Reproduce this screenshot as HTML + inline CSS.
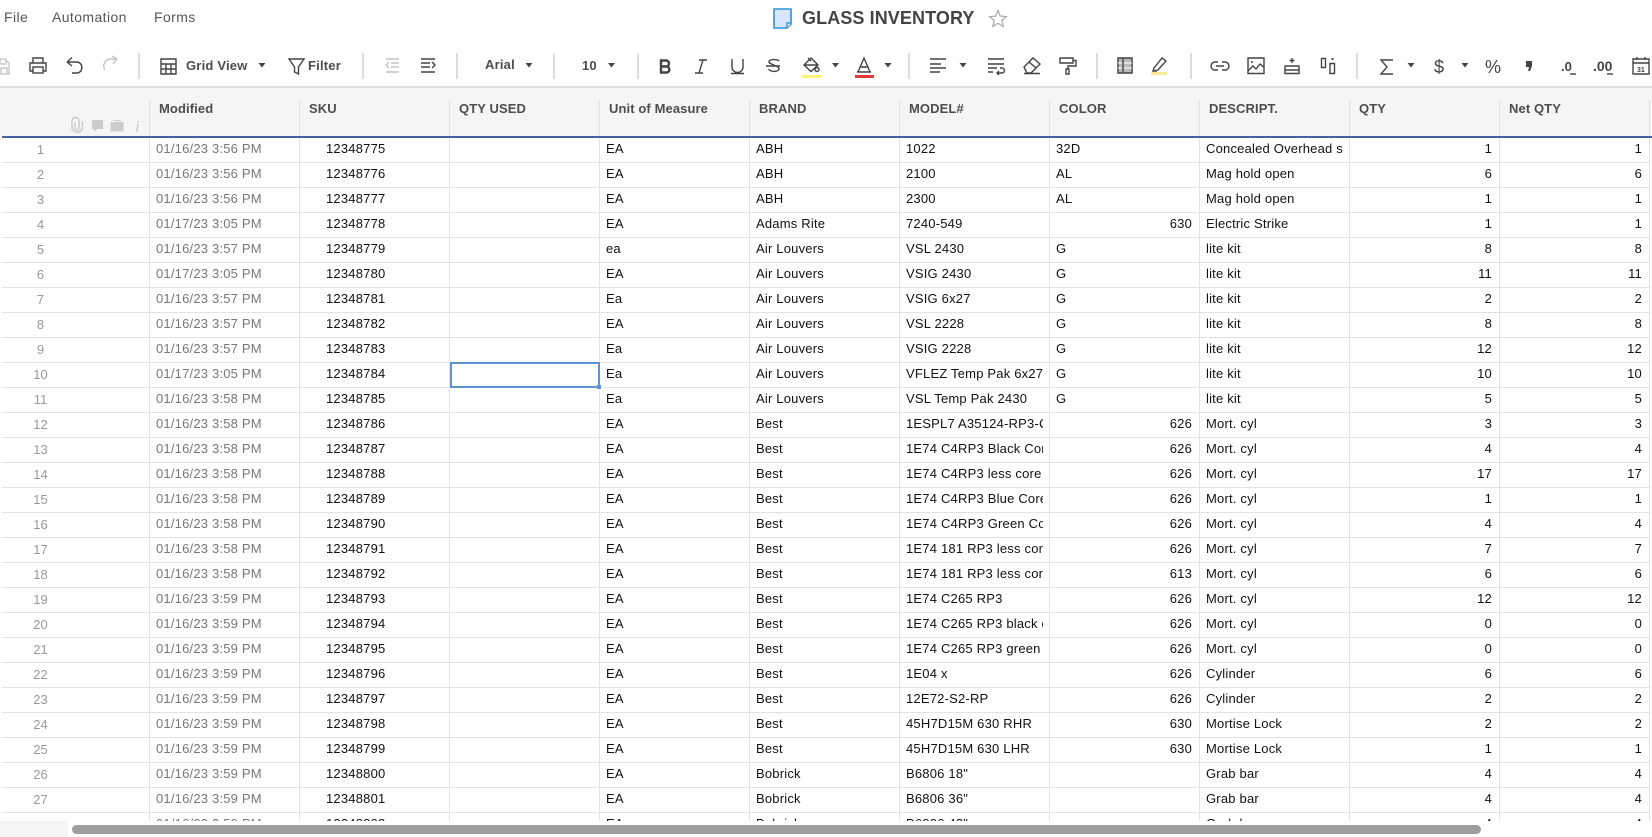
<!DOCTYPE html>
<html><head><meta charset="utf-8"><title>GLASS INVENTORY</title>
<style>
html,body{margin:0;padding:0;background:#fff;width:1652px;height:837px;overflow:hidden;font-family:"Liberation Sans",Arial,sans-serif}
.a{position:absolute;white-space:nowrap}
.m{top:9px;font-size:14px;color:#555;letter-spacing:.4px}
.t{font-size:13px;font-weight:bold;color:#4d4d4d;letter-spacing:.2px}
#hdr{position:absolute;left:0;top:86px;width:1652px;height:50px;background:#f6f5f3;border-top:2px solid #dedcd9;box-sizing:border-box}
.h{position:absolute;top:12px;height:38px;width:150px;border-left:1px solid #e2e2e2;box-sizing:border-box;padding:0 0 0 9px;font-size:13px;font-weight:bold;color:#4d4d4d;line-height:17px;letter-spacing:.1px}
#line{position:absolute;left:2px;top:136px;width:1650px;height:2px;background:#47609f}
#g{position:absolute;left:2px;top:138px;width:1650px;height:683px;overflow:hidden}
table{border-collapse:separate;border-spacing:0;table-layout:fixed;width:1648px;font-size:13px;color:#111;letter-spacing:.2px}
col{width:150px}col.f{width:148px}
td{height:24px;padding:0;border-right:1px solid #e3e3e3;border-bottom:1px solid #e3e3e3;box-sizing:content-box;line-height:22px;vertical-align:top}
td>b{display:block;font-weight:normal;margin:0 6px 0 6px;overflow:hidden;white-space:nowrap;height:22px}
td.n{text-align:center;color:#999;padding-right:70px;box-sizing:border-box;line-height:24px;letter-spacing:0}
td.d{color:#777}
td.s>b{margin-left:26px}
td.r{text-align:right}td.r>b{margin-right:7px}
#sel{position:absolute;left:450px;top:362px;width:150px;height:26px;box-sizing:border-box;border:2px solid #5b94d0}
#selh{position:absolute;left:597px;top:385px;width:4px;height:4px;background:#5b94d0}
#foot{position:absolute;left:0;top:821px;width:68px;height:16px;background:#f6f5f3}
#bar{position:absolute;left:72px;top:825px;width:1409px;height:9px;background:#9e9e9e;border-radius:5px}
svg{position:absolute;left:0;top:0}
.i{fill:none;stroke:#444;stroke-width:1.4}
.l{fill:none;stroke:#c4c4c4;stroke-width:1.4}
.c{fill:#444}
</style></head><body>
<div class="a m" style="left:4px">File</div>
<div class="a m" style="left:52px">Automation</div>
<div class="a m" style="left:154px">Forms</div>
<div class="a" style="left:802px;top:8px;font-size:18px;font-weight:bold;color:#444;letter-spacing:.1px">GLASS INVENTORY</div>
<div class="a t" style="left:186px;top:58px">Grid View</div>
<div class="a t" style="left:308px;top:58px">Filter</div>
<div class="a t" style="left:485px;top:57px">Arial</div>
<div class="a t" style="left:582px;top:58px">10</div>
<div id="hdr">
<div class="h" style="left:149px">Modified</div><div class="h" style="left:299px">SKU</div><div class="h" style="left:449px">QTY USED</div><div class="h" style="left:599px">Unit of Measure</div><div class="h" style="left:749px">BRAND</div><div class="h" style="left:899px">MODEL#</div><div class="h" style="left:1049px">COLOR</div><div class="h" style="left:1199px">DESCRIPT.</div><div class="h" style="left:1349px">QTY</div><div class="h" style="left:1499px">Net QTY</div><div class="h" style="left:1649px"></div>
</div>
<div id="line"></div>
<div id="g"><table><colgroup><col class="f"><col><col><col><col><col><col><col><col><col><col></colgroup>
<tr><td class="n">1</td><td class="d"><b>01/16/23 3:56 PM</b></td><td class="s"><b>12348775</b></td><td></td><td><b>EA</b></td><td><b>ABH</b></td><td><b>1022</b></td><td><b>32D</b></td><td><b>Concealed Overhead stop</b></td><td class="r"><b>1</b></td><td class="r"><b>1</b></td></tr>
<tr><td class="n">2</td><td class="d"><b>01/16/23 3:56 PM</b></td><td class="s"><b>12348776</b></td><td></td><td><b>EA</b></td><td><b>ABH</b></td><td><b>2100</b></td><td><b>AL</b></td><td><b>Mag hold open</b></td><td class="r"><b>6</b></td><td class="r"><b>6</b></td></tr>
<tr><td class="n">3</td><td class="d"><b>01/16/23 3:56 PM</b></td><td class="s"><b>12348777</b></td><td></td><td><b>EA</b></td><td><b>ABH</b></td><td><b>2300</b></td><td><b>AL</b></td><td><b>Mag hold open</b></td><td class="r"><b>1</b></td><td class="r"><b>1</b></td></tr>
<tr><td class="n">4</td><td class="d"><b>01/17/23 3:05 PM</b></td><td class="s"><b>12348778</b></td><td></td><td><b>EA</b></td><td><b>Adams Rite</b></td><td><b>7240-549</b></td><td class="r"><b>630</b></td><td><b>Electric Strike</b></td><td class="r"><b>1</b></td><td class="r"><b>1</b></td></tr>
<tr><td class="n">5</td><td class="d"><b>01/16/23 3:57 PM</b></td><td class="s"><b>12348779</b></td><td></td><td><b>ea</b></td><td><b>Air Louvers</b></td><td><b>VSL 2430</b></td><td><b>G</b></td><td><b>lite kit</b></td><td class="r"><b>8</b></td><td class="r"><b>8</b></td></tr>
<tr><td class="n">6</td><td class="d"><b>01/17/23 3:05 PM</b></td><td class="s"><b>12348780</b></td><td></td><td><b>EA</b></td><td><b>Air Louvers</b></td><td><b>VSIG 2430</b></td><td><b>G</b></td><td><b>lite kit</b></td><td class="r"><b>11</b></td><td class="r"><b>11</b></td></tr>
<tr><td class="n">7</td><td class="d"><b>01/16/23 3:57 PM</b></td><td class="s"><b>12348781</b></td><td></td><td><b>Ea</b></td><td><b>Air Louvers</b></td><td><b>VSIG 6x27</b></td><td><b>G</b></td><td><b>lite kit</b></td><td class="r"><b>2</b></td><td class="r"><b>2</b></td></tr>
<tr><td class="n">8</td><td class="d"><b>01/16/23 3:57 PM</b></td><td class="s"><b>12348782</b></td><td></td><td><b>EA</b></td><td><b>Air Louvers</b></td><td><b>VSL 2228</b></td><td><b>G</b></td><td><b>lite kit</b></td><td class="r"><b>8</b></td><td class="r"><b>8</b></td></tr>
<tr><td class="n">9</td><td class="d"><b>01/16/23 3:57 PM</b></td><td class="s"><b>12348783</b></td><td></td><td><b>Ea</b></td><td><b>Air Louvers</b></td><td><b>VSIG 2228</b></td><td><b>G</b></td><td><b>lite kit</b></td><td class="r"><b>12</b></td><td class="r"><b>12</b></td></tr>
<tr><td class="n">10</td><td class="d"><b>01/17/23 3:05 PM</b></td><td class="s"><b>12348784</b></td><td></td><td><b>Ea</b></td><td><b>Air Louvers</b></td><td><b>VFLEZ Temp Pak 6x27</b></td><td><b>G</b></td><td><b>lite kit</b></td><td class="r"><b>10</b></td><td class="r"><b>10</b></td></tr>
<tr><td class="n">11</td><td class="d"><b>01/16/23 3:58 PM</b></td><td class="s"><b>12348785</b></td><td></td><td><b>Ea</b></td><td><b>Air Louvers</b></td><td><b>VSL Temp Pak 2430</b></td><td><b>G</b></td><td><b>lite kit</b></td><td class="r"><b>5</b></td><td class="r"><b>5</b></td></tr>
<tr><td class="n">12</td><td class="d"><b>01/16/23 3:58 PM</b></td><td class="s"><b>12348786</b></td><td></td><td><b>EA</b></td><td><b>Best</b></td><td><b>1ESPL7 A35124-RP3-CORE</b></td><td class="r"><b>626</b></td><td><b>Mort. cyl</b></td><td class="r"><b>3</b></td><td class="r"><b>3</b></td></tr>
<tr><td class="n">13</td><td class="d"><b>01/16/23 3:58 PM</b></td><td class="s"><b>12348787</b></td><td></td><td><b>EA</b></td><td><b>Best</b></td><td><b>1E74 C4RP3 Black Core</b></td><td class="r"><b>626</b></td><td><b>Mort. cyl</b></td><td class="r"><b>4</b></td><td class="r"><b>4</b></td></tr>
<tr><td class="n">14</td><td class="d"><b>01/16/23 3:58 PM</b></td><td class="s"><b>12348788</b></td><td></td><td><b>EA</b></td><td><b>Best</b></td><td><b>1E74 C4RP3 less core</b></td><td class="r"><b>626</b></td><td><b>Mort. cyl</b></td><td class="r"><b>17</b></td><td class="r"><b>17</b></td></tr>
<tr><td class="n">15</td><td class="d"><b>01/16/23 3:58 PM</b></td><td class="s"><b>12348789</b></td><td></td><td><b>EA</b></td><td><b>Best</b></td><td><b>1E74 C4RP3 Blue Core</b></td><td class="r"><b>626</b></td><td><b>Mort. cyl</b></td><td class="r"><b>1</b></td><td class="r"><b>1</b></td></tr>
<tr><td class="n">16</td><td class="d"><b>01/16/23 3:58 PM</b></td><td class="s"><b>12348790</b></td><td></td><td><b>EA</b></td><td><b>Best</b></td><td><b>1E74 C4RP3 Green Core</b></td><td class="r"><b>626</b></td><td><b>Mort. cyl</b></td><td class="r"><b>4</b></td><td class="r"><b>4</b></td></tr>
<tr><td class="n">17</td><td class="d"><b>01/16/23 3:58 PM</b></td><td class="s"><b>12348791</b></td><td></td><td><b>EA</b></td><td><b>Best</b></td><td><b>1E74 181 RP3 less core</b></td><td class="r"><b>626</b></td><td><b>Mort. cyl</b></td><td class="r"><b>7</b></td><td class="r"><b>7</b></td></tr>
<tr><td class="n">18</td><td class="d"><b>01/16/23 3:58 PM</b></td><td class="s"><b>12348792</b></td><td></td><td><b>EA</b></td><td><b>Best</b></td><td><b>1E74 181 RP3 less core</b></td><td class="r"><b>613</b></td><td><b>Mort. cyl</b></td><td class="r"><b>6</b></td><td class="r"><b>6</b></td></tr>
<tr><td class="n">19</td><td class="d"><b>01/16/23 3:59 PM</b></td><td class="s"><b>12348793</b></td><td></td><td><b>EA</b></td><td><b>Best</b></td><td><b>1E74 C265 RP3</b></td><td class="r"><b>626</b></td><td><b>Mort. cyl</b></td><td class="r"><b>12</b></td><td class="r"><b>12</b></td></tr>
<tr><td class="n">20</td><td class="d"><b>01/16/23 3:59 PM</b></td><td class="s"><b>12348794</b></td><td></td><td><b>EA</b></td><td><b>Best</b></td><td><b>1E74 C265 RP3 black core</b></td><td class="r"><b>626</b></td><td><b>Mort. cyl</b></td><td class="r"><b>0</b></td><td class="r"><b>0</b></td></tr>
<tr><td class="n">21</td><td class="d"><b>01/16/23 3:59 PM</b></td><td class="s"><b>12348795</b></td><td></td><td><b>EA</b></td><td><b>Best</b></td><td><b>1E74 C265 RP3 green core</b></td><td class="r"><b>626</b></td><td><b>Mort. cyl</b></td><td class="r"><b>0</b></td><td class="r"><b>0</b></td></tr>
<tr><td class="n">22</td><td class="d"><b>01/16/23 3:59 PM</b></td><td class="s"><b>12348796</b></td><td></td><td><b>EA</b></td><td><b>Best</b></td><td><b>1E04 x</b></td><td class="r"><b>626</b></td><td><b>Cylinder</b></td><td class="r"><b>6</b></td><td class="r"><b>6</b></td></tr>
<tr><td class="n">23</td><td class="d"><b>01/16/23 3:59 PM</b></td><td class="s"><b>12348797</b></td><td></td><td><b>EA</b></td><td><b>Best</b></td><td><b>12E72-S2-RP</b></td><td class="r"><b>626</b></td><td><b>Cylinder</b></td><td class="r"><b>2</b></td><td class="r"><b>2</b></td></tr>
<tr><td class="n">24</td><td class="d"><b>01/16/23 3:59 PM</b></td><td class="s"><b>12348798</b></td><td></td><td><b>EA</b></td><td><b>Best</b></td><td><b>45H7D15M 630 RHR</b></td><td class="r"><b>630</b></td><td><b>Mortise Lock</b></td><td class="r"><b>2</b></td><td class="r"><b>2</b></td></tr>
<tr><td class="n">25</td><td class="d"><b>01/16/23 3:59 PM</b></td><td class="s"><b>12348799</b></td><td></td><td><b>EA</b></td><td><b>Best</b></td><td><b>45H7D15M 630 LHR</b></td><td class="r"><b>630</b></td><td><b>Mortise Lock</b></td><td class="r"><b>1</b></td><td class="r"><b>1</b></td></tr>
<tr><td class="n">26</td><td class="d"><b>01/16/23 3:59 PM</b></td><td class="s"><b>12348800</b></td><td></td><td><b>EA</b></td><td><b>Bobrick</b></td><td><b>B6806 18"</b></td><td></td><td><b>Grab bar</b></td><td class="r"><b>4</b></td><td class="r"><b>4</b></td></tr>
<tr><td class="n">27</td><td class="d"><b>01/16/23 3:59 PM</b></td><td class="s"><b>12348801</b></td><td></td><td><b>EA</b></td><td><b>Bobrick</b></td><td><b>B6806 36"</b></td><td></td><td><b>Grab bar</b></td><td class="r"><b>4</b></td><td class="r"><b>4</b></td></tr>
<tr><td class="n"></td><td class="d"><b>01/16/23 3:59 PM</b></td><td class="s"><b>12348802</b></td><td></td><td><b>EA</b></td><td><b>Bobrick</b></td><td><b>B6806 42"</b></td><td></td><td><b>Grab bar</b></td><td class="r"><b>4</b></td><td class="r"><b>4</b></td></tr>
</table></div>
<div id="sel"></div><div id="selh"></div>
<div id="foot"></div><div id="bar"></div>
<svg width="1652" height="837" viewBox="0 0 1652 837">
<!-- separators -->
<g fill="#dcdcdc"><rect x="138" y="53" width="2" height="26"/><rect x="362" y="53" width="2" height="26"/><rect x="456" y="53" width="2" height="26"/><rect x="553" y="53" width="2" height="26"/><rect x="637" y="53" width="2" height="26"/><rect x="908" y="53" width="2" height="26"/><rect x="1096" y="53" width="2" height="26"/><rect x="1190" y="53" width="2" height="26"/><rect x="1356" y="53" width="2" height="26"/></g>
<!-- carets -->
<g class="c"><path d="M258.500 63h7l-3.500 4.500z"/><path d="M525.500 63h7l-3.500 4.500z"/><path d="M608 63h7l-3.500 4.500z"/><path d="M832 63h7l-3.500 4.500z"/><path d="M884.500 63h7l-3.500 4.500z"/><path d="M959.500 63h7l-3.500 4.500z"/><path d="M1407.500 63h7l-3.500 4.500z"/><path d="M1461.500 63h7l-3.500 4.500z"/></g>
<!-- save -->
<path d="M-5 59h10l4 4v11H-5zM0 59v5h6v-5M1 74v-6h6v6" fill="none" stroke="#c8c8c8" stroke-width="1.4"/>
<!-- print -->
<g class="i"><path d="M33 63v-5h10v5M33 71h-3v-8h16v8h-3"/><rect x="33" y="67" width="10" height="6"/></g>
<!-- undo / redo -->
<path class="i" d="M67 62l5-4.500M67 62l5 4M67 62h10a4.800 5.400 0 0 1 0 11h-5"/>
<path class="l" d="M117 59l-5-3M117 59l-4 5M117 59h-7a6.500 7 0 0 0-5 11"/>
<!-- grid -->
<path class="i" d="M161 59h15v15h-15zM161 64h15M161 69h15M166 64v10M171 64v10"/>
<!-- filter -->
<path class="i" d="M289 59h15l-5.500 8v7l-4-2v-5z"/>
<!-- outdent / indent -->
<path class="l" d="M386 59h13M391 63h8M391 67h8M386 72h13M389 62l-3 3 3 3"/>
<path class="i" d="M421 59h14M421 63h9M421 67h9M421 72h14M432 62l3 3-3 3"/>
<!-- B I U S -->
<path d="M661 60.500h5a3 3 0 0 1 0 6h-5zM661 66.500h6a3.100 3.100 0 0 1 0 6h-6z" fill="none" stroke="#444" stroke-width="2.400"/>
<path class="i" d="M699 60h8M695 73h8M703 60l-4 13"/>
<path class="i" d="M732 59v8a5.500 5.500 0 0 0 11 0v-8M731 73.500h13"/>
<path class="i" d="M766 66h14M779 61c-2-2-9-2-10 .500-.8 3 9 3.500 10 7 .5 3.500-8 4-10.500 .5"/>
<!-- fill -->
<path class="i" d="M804 65l7-7 7 7-7 6.500zM808 58l3 3M804 65h14"/><circle cx="817" cy="69.500" r="2" fill="none" stroke="#444" stroke-width="1.400"/><rect x="802" y="75" width="19" height="3" fill="#fbf47c"/>
<!-- font color -->
<path class="i" d="M858 72l6-14 6 14M860 67h8M857 72h14"/><rect x="855" y="75" width="19" height="3" fill="#e53935"/>
<!-- align -->
<path class="i" d="M930 59h16M930 64h11M930 68h16M930 72h10"/>
<!-- wrap -->
<path class="i" d="M988 59h16M988 64h16M988 68h9M988 72h5M1000 68h2a2 2 0 0 1 0 5h-5M999 71l-2 2 2 2"/>
<!-- eraser -->
<path class="i" d="M1024 67l9-9 7 6-9 9h-4zM1029 62l7 6M1024 73.500h16"/>
<!-- paint -->
<path class="i" d="M1060 58h13v5h-13zM1073 60.500h3v5.500h-8v3M1066 69h3v5h-3z"/>
<!-- table / highlight -->
<path d="M1118 58h14v15h-14z" fill="#bbb" stroke="#444" stroke-width="1.500"/><path d="M1118 63h14M1118 68h14" stroke="#fff" stroke-width="1"/><path d="M1123 58v15" stroke="#444" stroke-width="1.400"/>
<path class="i" d="M1154 68l8-10 4 3-8 9-5 1zM1153 71h4"/><rect x="1151" y="72" width="16" height="3" fill="#fbe99a"/>
<!-- link -->
<path class="i" d="M1218 62h-3a4 4 0 0 0 0 8h3M1222 62h3a4 4 0 0 1 0 8h-3M1216 66h8"/>
<!-- image -->
<path class="i" d="M1248 58h16v15.500h-16zM1248 71l5-5 3 3 4-5 4 3.500"/><circle cx="1252" cy="62" r="1" fill="#444"/>
<!-- insert row -->
<path class="i" d="M1285 66h14v7.500h-14zM1285 70h14M1292 58v5M1289.500 60.500h5"/>
<!-- insert col -->
<path class="i" d="M1321.500 58.500h4v9h-4zM1330 63.500h4.500v10h-4.500z"/><path class="c" d="M1331.500 58h2v2h-2z"/>
<!-- sigma, $ -->
<path class="i" d="M1393 60h-12l6 7-6 7h12"/>
<text x="1434" y="73" font-family="Liberation Sans" font-size="18" fill="#444">$</text>
<text x="1485" y="73" font-family="Liberation Sans" font-size="18" fill="#444">%</text>
<path class="c" d="M1526 61h6v5l-2 5h-2l1-4h-3z"/>
<text x="1561" y="71" font-family="Liberation Sans" font-size="13" font-weight="bold" fill="#444">.0</text>
<path class="i" d="M1570 74h6" stroke-width="1"/>
<text x="1593" y="71" font-family="Liberation Sans" font-size="14" font-weight="bold" fill="#444">.00</text>
<path class="i" d="M1607 74h6" stroke-width="1"/>
<!-- calendar -->
<path class="i" d="M1633 59h16v15h-16zM1633 63h16M1637 57v3M1645 57v3"/>
<text x="1637" y="72" font-family="Liberation Sans" font-size="7" font-weight="bold" fill="#444">31</text>
<!-- doc icon -->
<path d="M774 9h17v15l-4 4h-13z" fill="#d8e6fb" stroke="#2f92db" stroke-width="1.600"/><path d="M791 23h-4v5" fill="#fff" stroke="#2f92db" stroke-width="1.400"/>
<!-- star -->
<path d="M998 10.500l2.300 5.600 6.100.500-4.600 4 1.400 5.900-5.200-3.200-5.200 3.200 1.400-5.900-4.600-4 6.100-.500z" fill="none" stroke="#a8a8a8" stroke-width="1.200"/>
<!-- header mini icons -->
<path d="M75 122v5.500a2 2.500 0 0 0 4 0v-6.500a3.500 3.500 0 0 0-7 0v6.500a5 4.500 0 0 0 10.500 0v-6" fill="none" stroke="#ccc" stroke-width="1.500"/>
<path d="M92 120h11v9h-6l-3 3v-3h-2z" fill="#ccc"/>
<path d="M111 122.500h12v8.500h-12zM113 120.500h8" fill="#ccc" stroke="#ccc"/>
<text x="135" y="132" font-family="Liberation Serif" font-style="italic" font-size="17" fill="#ccc">i</text>
</svg>
</body></html>
